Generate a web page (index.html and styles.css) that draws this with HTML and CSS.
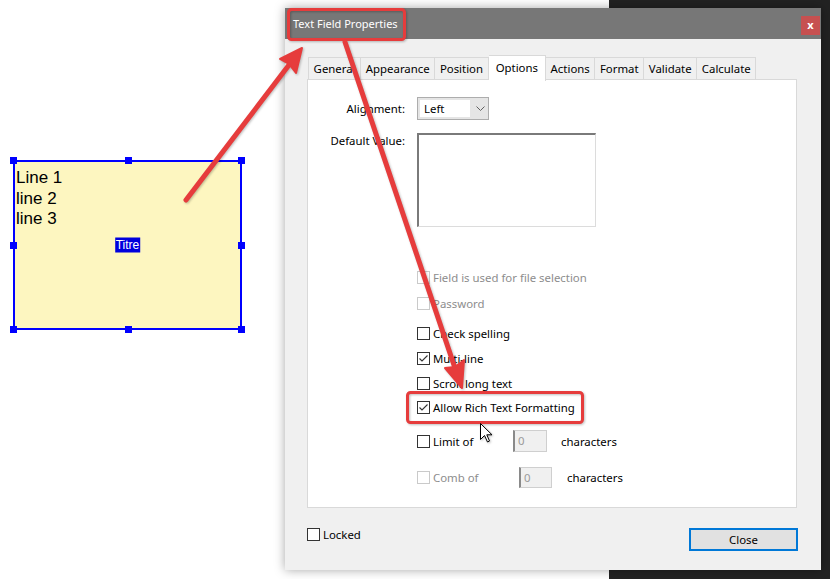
FILE: index.html
```html
<!DOCTYPE html>
<html lang="en">
<head>
    <meta charset="UTF-8">
    <title>Text Field Properties</title>
    <link rel="stylesheet" href="styles.css">
</head>
<body>
    <div class="desk">
        <div class="backdrop"></div>

        <!-- the form field on the page -->
        <div class="field-box">
            <span class="handle h-tl"></span>
            <span class="handle h-tm"></span>
            <span class="handle h-tr"></span>
            <span class="handle h-ml"></span>
            <span class="handle h-mr"></span>
            <span class="handle h-bl"></span>
            <span class="handle h-bm"></span>
            <span class="handle h-br"></span>
            <div class="field-text">Line 1<br>line 2<br>line 3</div>
            <span class="field-name">Titre</span>
        </div>

        <!-- properties dialog -->
        <div class="dialog">
            <div class="titlebar">
                <span class="title">Text Field Properties</span>
                <span class="close-x">x</span>
            </div>
            <div class="dlg-body">
                <ul class="tabs">
                    <li>General</li>
                    <li>Appearance</li>
                    <li>Position</li>
                    <li class="active">Options</li>
                    <li>Actions</li>
                    <li>Format</li>
                    <li>Validate</li>
                    <li>Calculate</li>
                </ul>
                <div class="panel">
                    <div class="form-grid">
                        <label class="lbl lbl-mid">Alignment:</label>
                        <div class="combo">
                            <span class="combo-value">Left</span>
                            <svg class="chevron" width="9" height="6" viewBox="0 0 9 6"><polyline points="0.5,0.5 4.5,4.5 8.5,0.5" fill="none" stroke="#606060" stroke-width="1"/></svg>
                        </div>
                        <label class="lbl">Default Value:</label>
                        <div class="textarea"></div>
                    </div>

                    <div class="options">
                        <div class="opt-row disabled r1"><span class="cb"></span>Field is used for file selection</div>
                        <div class="opt-row disabled r2"><span class="cb"></span>Password</div>
                        <div class="opt-row r3"><span class="cb"></span>Check spelling</div>
                        <div class="opt-row r4"><span class="cb"><svg width="11" height="11" viewBox="0 0 11 11"><polyline points="1.5,5.5 4,8 9.5,2.5" fill="none" stroke="#333" stroke-width="1.1"/></svg></span>Multi-line</div>
                        <div class="opt-row r5"><span class="cb"></span>Scroll long text</div>
                        <div class="opt-row r6"><span class="cb"><svg width="11" height="11" viewBox="0 0 11 11"><polyline points="1.5,5.5 4,8 9.5,2.5" fill="none" stroke="#333" stroke-width="1.1"/></svg></span>Allow Rich Text Formatting</div>
                        <div class="opt-row r7">
                            <span class="cb"></span><span class="limit-label">Limit of</span>
                            <span class="num num-limit">0</span><span class="unit">characters</span>
                        </div>
                        <div class="opt-row disabled r8">
                            <span class="cb"></span><span class="comb-label">Comb of</span>
                            <span class="num num-comb">0</span><span class="unit unit-comb">characters</span>
                        </div>
                    </div>
                </div>

                <div class="footer">
                    <div class="locked"><span class="cb"></span>Locked</div>
                    <button class="btn-close">Close</button>
                </div>
            </div>
        </div>

        <!-- annotation layer -->
        <svg class="marks" width="830" height="579" viewBox="0 0 830 579">
            <g stroke="#e63c3c" fill="none" stroke-linecap="round" stroke-linejoin="round">
                <rect x="288.5" y="9.5" width="116" height="30" rx="3" stroke-width="3"/>
                <rect x="407.5" y="392.5" width="175" height="30" rx="3" stroke-width="3"/>
                <line x1="186" y1="200" x2="292" y2="61" stroke-width="5"/>
                <line x1="345" y1="42" x2="457" y2="374" stroke-width="5"/>
            </g>
            <g fill="#e63c3c" stroke="#e63c3c" stroke-width="2" stroke-linejoin="round">
                <polygon points="302,48 296,73 289,64 280,59"/>
                <polygon points="462,388 445,368 455,367 464,360"/>
            </g>
            <polygon class="cursor" points="480.5,423.5 480.5,439.5 484.5,435.5 487.5,442 489.5,441 486.8,434.8 492,434.8" fill="#fff" stroke="#000" stroke-width="1" stroke-linejoin="round"/>
        </svg>
    </div>
</body>
</html>
```

FILE: styles.css
```css
body {
    margin: 0;
    background: #fff;
    font-family: "Noto Sans", "Open Sans", sans-serif;
    font-size: 11.4px;
    color: #000;
}

.desk {
    position: relative;
    width: 830px;
    height: 579px;
    overflow: hidden;
    background: #fff;
}

.backdrop {
    position: absolute;
    left: 609px;
    top: 0;
    right: 0;
    bottom: 0;
    background: #222;
}

/* Field on the page */
.field-box {
    position: absolute;
    left: 13px;
    top: 160px;
    width: 225px;
    height: 166px;
    border: 2px solid #0000ff;
    background: #fdf6c0;
}

.field-text {
    padding: 6px 0 0 1px;
    font-family: "Liberation Sans", Arial, sans-serif;
    font-size: 17px;
    line-height: 20.5px;
    color: #000;
}

.field-name {
    position: absolute;
    left: 50%;
    top: 50%;
    transform: translate(-50%, -50%);
    padding: 0 1px;
    background: #0000dd;
    color: #fff;
    font-family: "Liberation Sans", Arial, sans-serif;
    font-size: 12px;
    line-height: 15px;
}

.handle {
    position: absolute;
    width: 7px;
    height: 7px;
    background: #0000ff;
}

.h-tl { left: -5px; top: -5px; }
.h-tm { left: 110px; top: -5px; }
.h-tr { right: -5px; top: -5px; }
.h-ml { left: -5px; top: 80px; }
.h-mr { right: -5px; top: 80px; }
.h-bl { left: -5px; bottom: -5px; }
.h-bm { left: 110px; bottom: -5px; }
.h-br { right: -5px; bottom: -5px; }

/* Dialog window */
.dialog {
    position: absolute;
    left: 285px;
    top: 8px;
    width: 536px;
    height: 562px;
    background: #f0f0f0;
    box-shadow: 0 0 10px rgba(0, 0, 0, 0.35);
    display: flex;
    flex-direction: column;
}

.titlebar {
    height: 31px;
    background: #777;
    display: flex;
    align-items: flex-start;
}

.title {
    padding: 7px 0 0 8px;
    font-size: 11px;
    line-height: 17px;
    color: #fff;
}

.close-x {
    margin: 8px 1px 0 auto;
    width: 19px;
    height: 19px;
    background: #c75050;
    color: #fff;
    font-weight: bold;
    font-size: 11px;
    line-height: 18px;
    text-align: center;
}

.dlg-body {
    flex: 1;
    padding: 16px 24px 0 22px;
}

/* Tabs */
.tabs {
    list-style: none;
    margin: 0 0 -1px;
    padding: 0 0 0 1px;
    height: 25px;
    display: flex;
    align-items: flex-start;
}

.tabs li {
    margin-top: 2px;
    height: 21px;
    padding: 0 4.6px;
    border: 1px solid #d9d9d9;
    border-bottom: none;
    border-left: none;
    line-height: 21px;
    background: #f0f0f0;
}

.tabs li:first-child {
    border-left: 1px solid #d9d9d9;
}

.tabs li.active {
    margin-top: 0;
    height: 25px;
    line-height: 23px;
    padding: 0 7px;
    background: #fff;
    position: relative;
    z-index: 1;
}

.panel {
    height: 427px;
    border: 1px solid #d9d9d9;
    background: #fff;
}

.form-grid {
    display: grid;
    grid-template-columns: 97px auto;
    column-gap: 12px;
    row-gap: 13px;
    padding-top: 17px;
    align-items: start;
}

.lbl {
    text-align: right;
    line-height: 16px;
    color: #000;
}

.lbl-mid {
    align-self: center;
}

.combo {
    width: 70px;
    height: 21px;
    border: 1px solid #adadad;
    background: #e5e5e5;
    display: flex;
    align-items: center;
}

.combo-value {
    margin-left: 2px;
    width: 46px;
    height: 17px;
    padding-left: 4px;
    background: #fff;
    line-height: 17px;
}

.chevron {
    margin-left: 6px;
}

.textarea {
    width: 176px;
    height: 91px;
    background: #fff;
    border-top: 2px solid #7a7a7a;
    border-left: 2px solid #7a7a7a;
    border-right: 1px solid #dcdcdc;
    border-bottom: 1px solid #dcdcdc;
}

/* Check box options */
.options {
    margin-left: 109px;
    padding-top: 39px;
}

.opt-row {
    height: 22px;
    display: flex;
    align-items: center;
}

.r2 { margin-top: 4px; }
.r3 { margin-top: 8px; }
.r4, .r5 { margin-top: 3px; }
.r6 { margin-top: 2px; }
.r7 { margin-top: 12px; }
.r8 { margin-top: 14px; }

.cb {
    flex: none;
    width: 11px;
    height: 11px;
    margin-right: 3px;
    border: 1px solid #333;
    background: #fff;
    display: flex;
    align-items: center;
    justify-content: center;
}

.disabled {
    color: #8d8d8d;
}

.disabled .cb {
    border-color: #cacaca;
}

.limit-label {
    width: 80px;
}

.comb-label {
    width: 86px;
}

.num {
    height: 20px;
    padding-left: 3px;
    background: #f0f0f0;
    border: 1px solid #cfcfcf;
    border-left: 2px solid #8a8a8a;
    color: #9a9a9a;
    line-height: 20px;
}

.num-limit {
    width: 28px;
}

.num-comb {
    width: 27px;
    height: 19px;
    line-height: 19px;
}

.unit {
    margin-left: 14px;
    color: #000;
}

.unit-comb {
    margin-left: 15px;
}

/* Footer */
.footer {
    margin-top: 20px;
    display: flex;
    justify-content: space-between;
    align-items: flex-start;
}

.locked {
    display: flex;
    align-items: center;
    height: 13px;
    line-height: 13px;
}

.btn-close {
    width: 109px;
    height: 23px;
    margin-right: -1px;
    border: 2px solid #0078d7;
    background: #e1e1e1;
    font-family: inherit;
    font-size: 11.4px;
    color: #000;
    padding: 0;
}

/* Annotations drawn on top */
.marks {
    position: absolute;
    left: 0;
    top: 0;
    pointer-events: none;
    filter: drop-shadow(1px 1px 1px rgba(0, 0, 0, 0.25));
}
```
